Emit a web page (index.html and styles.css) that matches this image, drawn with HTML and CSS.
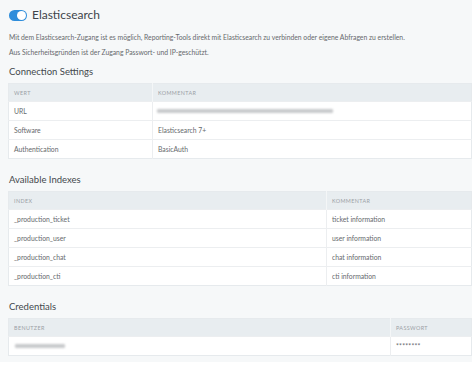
FILE: index.html
```html
<!DOCTYPE html>
<html lang="de">
<head>
<meta charset="utf-8">
<title>Elasticsearch</title>
<link rel="stylesheet" href="styles.css">
</head>
<body>
<div class="panel">
  <div class="title-row">
    <span class="toggle"><span class="knob"></span></span>
    <h1 class="title">Elasticsearch</h1>
  </div>
  <p class="intro">Mit dem Elasticsearch-Zugang ist es möglich, Reporting-Tools direkt mit Elasticsearch zu verbinden oder eigene Abfragen zu erstellen.</p>
  <p class="intro">Aus Sicherheitsgründen ist der Zugang Passwort- und IP-geschützt.</p>

  <h2 class="section">Connection Settings</h2>
  <table class="tbl">
    <colgroup><col class="c1a"><col></colgroup>
    <thead><tr><th>Wert</th><th>Kommentar</th></tr></thead>
    <tbody>
      <tr><td>URL</td><td><span class="blur blur-url"></span></td></tr>
      <tr><td>Software</td><td>Elasticsearch 7+</td></tr>
      <tr><td>Authentication</td><td>BasicAuth</td></tr>
    </tbody>
  </table>

  <h2 class="section">Available Indexes</h2>
  <table class="tbl">
    <colgroup><col class="c2a"><col></colgroup>
    <thead><tr><th>Index</th><th>Kommentar</th></tr></thead>
    <tbody>
      <tr><td>_production_ticket</td><td>ticket information</td></tr>
      <tr><td>_production_user</td><td>user information</td></tr>
      <tr><td>_production_chat</td><td>chat information</td></tr>
      <tr><td>_production_cti</td><td>cti information</td></tr>
    </tbody>
  </table>

  <h2 class="section">Credentials</h2>
  <table class="tbl">
    <colgroup><col class="c3a"><col></colgroup>
    <thead><tr><th>Benutzer</th><th>Passwort</th></tr></thead>
    <tbody>
      <tr><td><span class="blur blur-user"></span></td><td class="pw">********</td></tr>
    </tbody>
  </table>
</div>
</body>
</html>
```
FILE: styles.css
```css
* { box-sizing: border-box; }
html, body { margin: 0; padding: 0; background: #ffffff; }
body {
  font-family: Lato, "Open Sans", "DejaVu Sans", sans-serif;
  color: #66696d;
}
.panel {
  width: 472px;
  height: 362px;
  background: #f6f8f9;
  padding: 0 0 0 8px;
}
.title-row {
  height: 30px;
  display: flex;
  align-items: center;
  gap: 5px;
  padding-left: 1px;
}
.toggle {
  width: 18px;
  height: 11px;
  border-radius: 6px;
  background: #2e8ddb;
  display: flex;
  align-items: center;
  justify-content: flex-end;
  padding-right: 1px;
}
.knob {
  width: 9px;
  height: 9px;
  border-radius: 50%;
  background: #ffffff;
}
.title {
  margin: 0;
  font-size: 12px;
  font-weight: 400;
  color: #40444a;
  line-height: 1;
}
.intro {
  margin: 0;
  padding-left: 1px;
  font-size: 6.8px;
  line-height: 15px;
  color: #66696d;
}
.section {
  margin: 0;
  height: 20px;
  line-height: 20px;
  padding-left: 1px;
  font-size: 9.5px;
  font-weight: 400;
  color: #44484d;
}
.panel > p + .section { margin-top: 2px; }
.tbl {
  width: 464px;
  border-collapse: collapse;
  table-layout: fixed;
  background: #ffffff;
  margin-top: 1px;
  margin-bottom: 11px;
  border: 1px solid #e6eaed;
}
.c1a { width: 144px; }
.c2a { width: 318px; }
.c3a { width: 382px; }
.tbl th {
  height: 18px;
  background: #e8edf0;
  text-align: left;
  font-weight: 400;
  font-size: 5.4px;
  letter-spacing: 0.4px;
  text-transform: uppercase;
  color: #9ba0a5;
  padding: 0 5px;
  border-left: 1px solid #f4f6f7;
}
.tbl td {
  height: 19px;
  font-size: 6.8px;
  color: #66696d;
  padding: 0 5px;
  border-top: 1px solid #eceef0;
  border-left: 1px solid #eceef0;
}
.tbl th:first-child, .tbl td:first-child { border-left: none; }
.blur {
  display: block;
  height: 4px;
  background: #c8cacc;
  filter: blur(1px);
  border-radius: 1px;
}
.blur-url { width: 176px; margin-left: -1px; }
.blur-user { width: 50px; margin-left: 1px; }
.pw { font-size: 5px; letter-spacing: 0.2px; color: #5a5d61; }
```
